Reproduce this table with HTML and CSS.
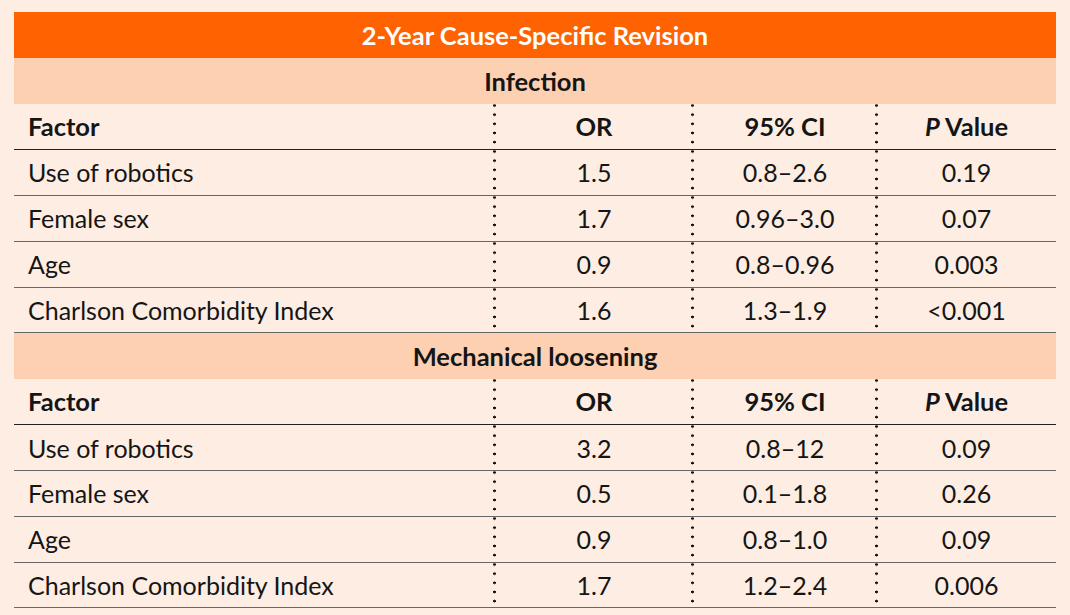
FILE: index.html
```html
<!DOCTYPE html>
<html>
<head>
<meta charset="utf-8">
<link rel="stylesheet" href="styles.css">
</head>
<body>
<table class="tbl">
  <colgroup>
    <col class="c-factor"><col class="c-or"><col class="c-ci"><col class="c-p">
  </colgroup>
  <tr class="title"><th colspan="4">2-Year Cause-Specific Revision</th></tr>
  <tr class="section"><th colspan="4">Infection</th></tr>
  <tr class="head"><th class="name">Factor</th><th class="num">OR</th><th class="num">95% CI</th><th class="num"><i>P</i> Value</th></tr>
  <tr><td class="name">Use of robotics</td><td class="num">1.5</td><td class="num">0.8–2.6</td><td class="num">0.19</td></tr>
  <tr><td class="name">Female sex</td><td class="num">1.7</td><td class="num">0.96–3.0</td><td class="num">0.07</td></tr>
  <tr><td class="name">Age</td><td class="num">0.9</td><td class="num">0.8–0.96</td><td class="num">0.003</td></tr>
  <tr><td class="name">Charlson Comorbidity Index</td><td class="num">1.6</td><td class="num">1.3–1.9</td><td class="num">&lt;0.001</td></tr>
  <tr class="section"><th colspan="4">Mechanical loosening</th></tr>
  <tr class="head"><th class="name">Factor</th><th class="num">OR</th><th class="num">95% CI</th><th class="num"><i>P</i> Value</th></tr>
  <tr><td class="name">Use of robotics</td><td class="num">3.2</td><td class="num">0.8–12</td><td class="num">0.09</td></tr>
  <tr><td class="name">Female sex</td><td class="num">0.5</td><td class="num">0.1–1.8</td><td class="num">0.26</td></tr>
  <tr><td class="name">Age</td><td class="num">0.9</td><td class="num">0.8–1.0</td><td class="num">0.09</td></tr>
  <tr><td class="name">Charlson Comorbidity Index</td><td class="num">1.7</td><td class="num">1.2–2.4</td><td class="num">0.006</td></tr>
</table>
</body>
</html>
```
FILE: styles.css
```css
html, body {
  margin: 0;
  background: #fdede3;
}
body {
  padding: 12px 14px;
  font-family: "Lato", "Open Sans", sans-serif;
  color: #151515;
}
.tbl {
  width: 1042px;
  border-collapse: collapse;
  table-layout: fixed;
  font-size: 25px;
}
.c-factor { width: 481px; }
.c-or { width: 198px; }
.c-ci { width: 184px; }
.c-p { width: 179px; }
.tbl th, .tbl td {
  height: 45.85px;
  padding: 0;
  box-sizing: border-box;
  vertical-align: middle;
}
.tbl th {
  font-size: 25.5px;
}
.title th {
  background: #ff6200;
  color: #ffffff;
  font-weight: 700;
  text-align: center;
}
.section th {
  background: #fed0b2;
  font-weight: 700;
  text-align: center;
}
.head th {
  font-weight: 700;
  border-bottom: 1px solid #222;
}
.tbl td {
  font-weight: 400;
  border-bottom: 1px solid #666;
}
.name {
  text-align: left;
  padding-left: 14px !important;
}
.num {
  text-align: center;
  position: relative;
}
.num::before {
  content: "";
  position: absolute;
  left: -1.6px;
  top: 0;
  bottom: 0;
  width: 3px;
  background-image: radial-gradient(circle at 1.5px 4.585px, #111 1.15px, transparent 1.55px);
  background-size: 3px 9.17px;
  background-repeat: repeat-y;
  background-position: 0 -3.1px;
}
```
